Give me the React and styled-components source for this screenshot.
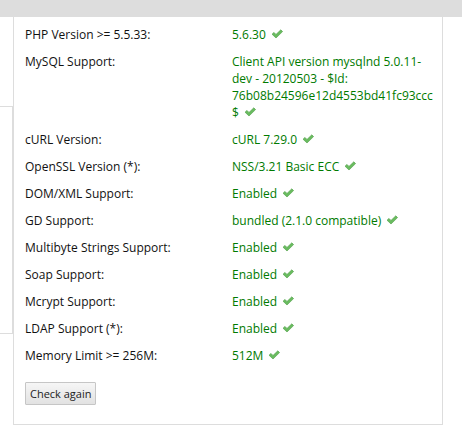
import React from "react";
import styled, { createGlobalStyle } from "styled-components";

const GlobalStyle = createGlobalStyle`
body{
  margin:0;
  background:#fff;
  font-family:"Open Sans","DejaVu Sans",sans-serif;
  font-size:12px;
}
`;

const Page = styled.div`
width:462px;
height:447px;
overflow:hidden;
`;
const TopBar = styled.div`
height:17px;
background:#dddddd;
`;
const Body = styled.div`
display:flex;
`;
const Side = styled.div`
width:13px;
padding-top:89px;
`;
const SideBox = styled.div`
height:226px;
border-top:1px solid #dddddd;
border-bottom:1px solid #dddddd;
border-right:1px solid #dddddd;
`;
const Panel = styled.div`
width:430px;
box-sizing:border-box;
border:1px solid #dddddd;
border-top:none;
padding:4px 0 19px 11px;
`;
const Table = styled.div`
display:grid;
grid-template-columns:207px 205px;
`;
const Label = styled.div`
padding:5px 0;
line-height:17px;
color:#111;
`;
const Value = styled.div`
padding:5px 0;
line-height:17px;
color:#007a00;
word-wrap:break-word;
`;
const Check = styled.svg`
width:12px;
height:10px;
margin-left:5px;
vertical-align:0px;
`;
const Button = styled.button`
margin-top:13px;
font-family:"Open Sans","DejaVu Sans",sans-serif;
font-size:11px;
color:#222;
height:23px;
padding:0 4px;
background:linear-gradient(#f6f6f6,#e2e2e2);
border:1px solid #c6c6c6;
border-radius:1px;
`;

function Tick(){
    return(
        <Check viewBox="0 0 12 10">
            <path d="M1 5.2 L3 3.4 L5 5.4 L9.8 0.8 L11.6 2.6 L5 9 Z" fill="#69bb5f" stroke="#4e9e45" strokeWidth="0.6" strokeLinejoin="round"/>
        </Check>
    )
}

const rows=[
    ["PHP Version >= 5.5.33:","5.6.30"],
    ["MySQL Support:","Client API version mysqlnd 5.0.11-dev - 20120503 - $Id: 76b08b24596e12d4553bd41fc93ccc $"],
    ["cURL Version:","cURL 7.29.0"],
    ["OpenSSL Version (*):","NSS/3.21 Basic ECC"],
    ["DOM/XML Support:","Enabled"],
    ["GD Support:","bundled (2.1.0 compatible)"],
    ["Multibyte Strings Support:","Enabled"],
    ["Soap Support:","Enabled"],
    ["Mcrypt Support:","Enabled"],
    ["LDAP Support (*):","Enabled"],
    ["Memory Limit >= 256M:","512M"],
];

function App(){
    return(
        <Page>
            <GlobalStyle/>
            <TopBar/>
            <Body>
                <Side><SideBox/></Side>
                <Panel>
                    <Table>
                        {rows.map(([l,v])=>(
                            <React.Fragment key={l}>
                                <Label>{l}</Label>
                                <Value>{v}<Tick/></Value>
                            </React.Fragment>
                        ))}
                    </Table>
                    <Button>Check again</Button>
                </Panel>
            </Body>
        </Page>
    )
}
export default App;
